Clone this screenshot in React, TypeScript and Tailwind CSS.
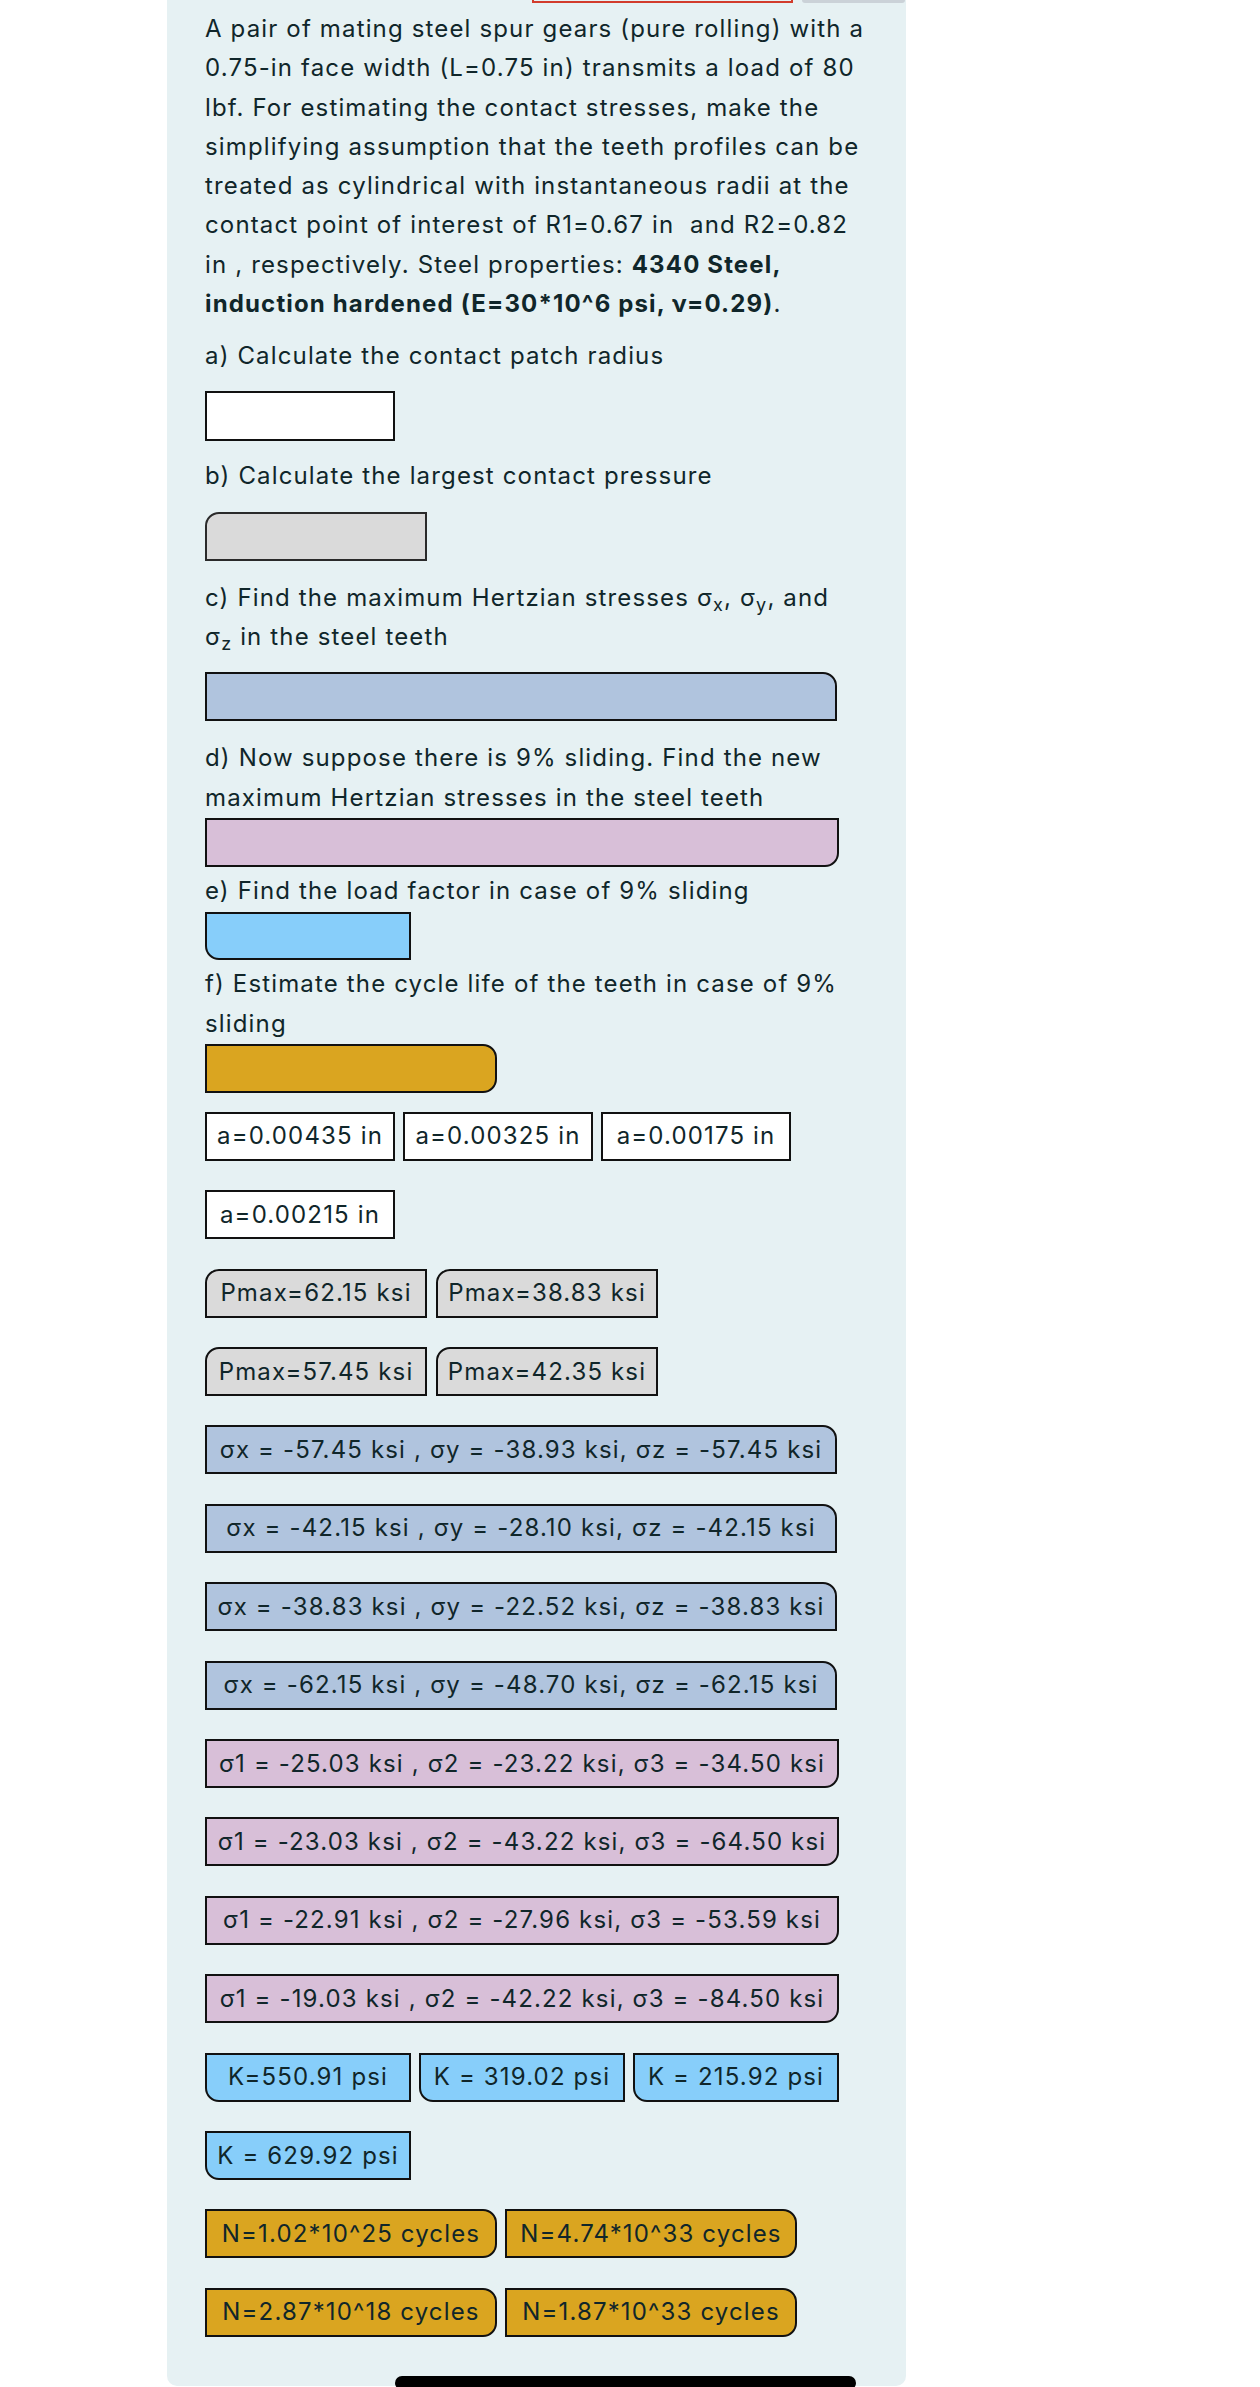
import React from "react";

const chipBase =
  "flex h-[49px] shrink-0 items-center justify-center whitespace-nowrap border-2 border-[#111]";

function Row({ children, gap = "gap-2" }: { children: React.ReactNode; gap?: string }) {
  return <div className={`flex ${gap}`}>{children}</div>;
}

export default function App() {
  const aChips = ["a=0.00435 in", "a=0.00325 in", "a=0.00175 in"];
  const pRows = [
    ["Pmax=62.15 ksi", "Pmax=38.83 ksi"],
    ["Pmax=57.45 ksi", "Pmax=42.35 ksi"],
  ];
  const sigmaXYZ = [
    "σx = -57.45 ksi , σy = -38.93 ksi, σz = -57.45 ksi",
    "σx = -42.15 ksi , σy = -28.10 ksi, σz = -42.15 ksi",
    "σx = -38.83 ksi , σy = -22.52 ksi, σz = -38.83 ksi",
    "σx = -62.15 ksi , σy = -48.70 ksi, σz = -62.15 ksi",
  ];
  const sigma123 = [
    "σ1 = -25.03 ksi , σ2 = -23.22 ksi, σ3 = -34.50 ksi",
    "σ1 = -23.03 ksi , σ2 = -43.22 ksi, σ3 = -64.50 ksi",
    "σ1 = -22.91 ksi , σ2 = -27.96 ksi, σ3 = -53.59 ksi",
    "σ1 = -19.03 ksi , σ2 = -42.22 ksi, σ3 = -84.50 ksi",
  ];
  const kChips = ["K=550.91 psi", "K = 319.02 psi", "K = 215.92 psi"];
  const nRows = [
    ["N=1.02*10^25 cycles", "N=4.74*10^33 cycles"],
    ["N=2.87*10^18 cycles", "N=1.87*10^33 cycles"],
  ];

  return (
    <div className="relative h-[2387px] overflow-hidden bg-white text-[24px] tracking-[1.15px] text-[#10262a] [font-family:Inter,'Noto_Sans',sans-serif]">
      <div className="ml-[167px] h-[2386px] w-[739px] rounded-b-[10px] bg-[#e6f1f3] pl-[38px] pr-[33px]">
        {/* partially visible controls at the very top */}
        <div className="ml-[327px] flex h-[3px] gap-[9px]">
          <div className="h-[3px] w-[261px] shrink-0 border-x-2 border-b-2 border-[#d23c2c]" />
          <div className="h-[3px] w-[103px] shrink-0 rounded-b-[6px] bg-[#cbd2d8]" />
        </div>

        <p className="mt-[6px] leading-[39.3px]">
          A pair of mating steel spur gears (pure rolling) with a 0.75-in face width (L=0.75 in) transmits a load
          of 80 lbf. For estimating the contact stresses, make the simplifying assumption that the teeth profiles
          can be treated as cylindrical with instantaneous radii at the contact point of interest of R1=0.67 in&nbsp;
          and R2=0.82 in , respectively. Steel properties:{" "}
          <b className="font-bold">4340 Steel, induction hardened (E=30*10^6 psi, ν=0.29)</b>.
        </p>

        <p className="mt-[13px] leading-[39.3px]">a) Calculate the contact patch radius</p>
        <div className="mt-[15px] h-[50px] w-[190px] border-2 border-[#111] bg-white" />

        <p className="mt-[15.6px] leading-[39.3px]">b) Calculate the largest contact pressure</p>
        <div className="mt-[16px] h-[49px] w-[222px] rounded-tl-[14px] border-2 border-[#2a2a2a] bg-[#dadada]" />

        <p className="mt-[17.6px] leading-[39.3px]">
          c) Find the maximum Hertzian stresses σ<sub>x</sub>, σ<sub>y</sub>, and
          <br />σ<sub>z</sub> in the steel teeth
        </p>
        <div className="mt-[15px] h-[49px] w-[632px] rounded-tr-[14px] border-2 border-[#111] bg-[#b0c4de]" />

        <p className="mt-[17.5px] leading-[39.3px]">
          d) Now suppose there is 9% sliding. Find the new maximum Hertzian stresses in the steel teeth
        </p>
        <div className="mt-[1px] h-[49px] w-[634px] rounded-br-[14px] border-2 border-[#111] bg-[#d8bfd8]" />

        <p className="mt-[4.6px] leading-[39.3px]">e) Find the load factor in case of 9% sliding</p>
        <div className="mt-[1px] h-[48px] w-[206px] rounded-bl-[14px] border-2 border-[#111] bg-[#87cefa]" />

        <p className="mt-[4.6px] leading-[39.3px]">f) Estimate the cycle life of the teeth in case of 9% sliding</p>
        <div className="mt-[1px] h-[49px] w-[292px] rounded-r-[14px] border-2 border-[#111] bg-[#daa520]" />

        <div className="mt-[19px] flex flex-col gap-[29.4px]">
          <Row>
            {aChips.map((t) => (
              <div key={t} className={`${chipBase} w-[190px] bg-white`}>
                {t}
              </div>
            ))}
          </Row>
          <Row>
            <div className={`${chipBase} w-[190px] bg-white`}>a=0.00215 in</div>
          </Row>

          {pRows.map((row, i) => (
            <Row key={i} gap="gap-[9px]">
              {row.map((t) => (
                <div key={t} className={`${chipBase} w-[222px] rounded-tl-[14px] bg-[#dadada]`}>
                  {t}
                </div>
              ))}
            </Row>
          ))}

          {sigmaXYZ.map((t) => (
            <Row key={t}>
              <div className={`${chipBase} w-[632px] rounded-tr-[14px] bg-[#b0c4de]`}>{t}</div>
            </Row>
          ))}

          {sigma123.map((t) => (
            <Row key={t}>
              <div className={`${chipBase} w-[634px] rounded-br-[14px] bg-[#d8bfd8]`}>{t}</div>
            </Row>
          ))}

          <Row>
            {kChips.map((t) => (
              <div key={t} className={`${chipBase} w-[206px] rounded-bl-[14px] bg-[#87cefa]`}>
                {t}
              </div>
            ))}
          </Row>
          <Row>
            <div className={`${chipBase} w-[206px] rounded-bl-[14px] bg-[#87cefa]`}>K = 629.92 psi</div>
          </Row>

          {nRows.map((row, i) => (
            <Row key={i}>
              {row.map((t) => (
                <div key={t} className={`${chipBase} w-[292px] rounded-r-[14px] bg-[#daa520]`}>
                  {t}
                </div>
              ))}
            </Row>
          ))}
        </div>
      </div>

      {/* home indicator */}
      <div className="absolute left-[395px] top-[2376px] h-[14px] w-[461px] rounded-full bg-black" />
    </div>
  );
}
